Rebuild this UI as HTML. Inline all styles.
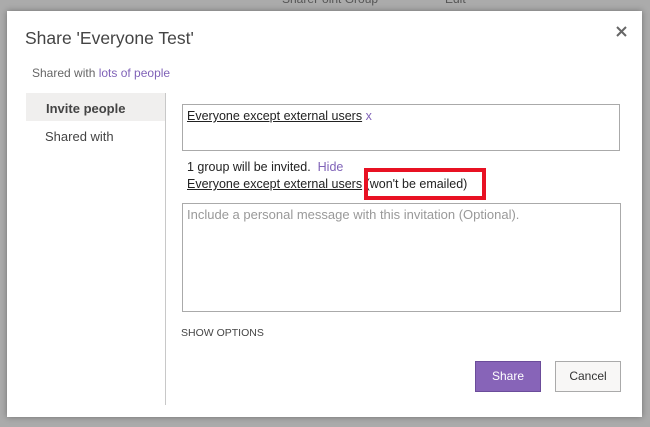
<!DOCTYPE html>
<html><head><style>
body{margin:0;width:650px;height:427px;background:#ababab;font-family:"Liberation Sans",sans-serif;position:relative;overflow:hidden}
.bgt{position:absolute;top:-8px;font-size:12px;color:#555}
.dlg{position:absolute;left:7px;top:11px;width:635px;height:406px;background:#fff;box-shadow:0 0 6px rgba(0,0,0,.35)}
.a{position:absolute;white-space:nowrap}
u{text-decoration:underline}
</style></head><body>
<div class="bgt" style="left:282px">SharePoint Group</div>
<div class="bgt" style="left:445px">Edit</div>
<div class="dlg">
<div class="a" style="left:18px;top:17px;font-size:17.5px;color:#444">Share 'Everyone Test'</div>
<svg class="a" style="left:609px;top:15px" width="11" height="11"><path d="M1 1L10 10M10 1L1 10" stroke="#666" stroke-width="2"/></svg>
<div class="a" style="left:25px;top:55px;font-size:12px;color:#666">Shared with <span style="color:#8063b8">lots of people</span></div>
<div class="a" style="left:19px;top:82px;width:139px;height:28px;background:#f0efee"></div>
<div class="a" style="left:158px;top:82px;width:1px;height:312px;background:#c8c8c8"></div>
<div class="a" style="left:39px;top:90px;font-size:13px;font-weight:bold;color:#444">Invite people</div>
<div class="a" style="left:38px;top:118px;font-size:13px;color:#444">Shared with</div>
<div class="a" style="left:175px;top:93px;width:436px;height:45px;border:1px solid #aaa"></div>
<div class="a" style="left:180px;top:98px;font-size:12.5px;color:#222"><u>Everyone except external users</u> <span style="color:#8063b8">x</span></div>
<div class="a" style="left:180px;top:149px;font-size:12.5px;color:#222">1 group will be invited.&nbsp; <span style="color:#8063b8">Hide</span></div>
<div class="a" style="left:180px;top:166px;font-size:12.5px;color:#222"><u>Everyone except external users</u> (won't be emailed)</div>
<div class="a" style="left:357px;top:157px;width:114px;height:24px;border:4px solid #e81123"></div>
<div class="a" style="left:175px;top:192px;width:437px;height:107px;border:1px solid #aaa"></div>
<div class="a" style="left:180px;top:196px;font-size:13px;color:#999">Include a personal message with this invitation (Optional).</div>
<div class="a" style="left:174px;top:316px;font-size:10.5px;color:#444">SHOW OPTIONS</div>
<div class="a" style="left:468px;top:350px;width:64px;height:29px;background:#8764b8;border:1px solid #6b4c9a;color:#fff;font-size:12px;text-align:center;line-height:29px">Share</div>
<div class="a" style="left:548px;top:350px;width:64px;height:29px;background:#f8f7f6;border:1px solid #aaa;color:#333;font-size:12px;text-align:center;line-height:29px">Cancel</div>
</div>
</body></html>
